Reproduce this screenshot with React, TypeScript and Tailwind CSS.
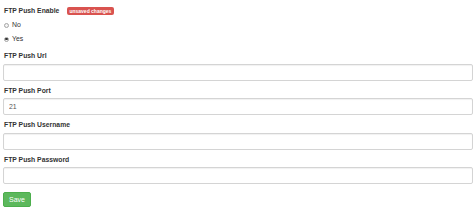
import { useState } from 'react';

const fields = [
  { label: 'FTP Push Url', value: '' },
  { label: 'FTP Push Port', value: '21' },
  { label: 'FTP Push Username', value: '' },
  { label: 'FTP Push Password', value: '' },
];

function Radio({ checked, label, onClick }: { checked: boolean; label: string; onClick: () => void }) {
  return (
    <label onClick={onClick} className="flex items-center h-[8px] cursor-pointer">
      <span className="ml-[1px] w-[5px] h-[5px] rounded-full border-[0.8px] border-[#a5a5a5] bg-[#f4f4f4] flex items-center justify-center">
        {checked && <span className="w-[2.4px] h-[2.4px] rounded-full bg-[#333]" />}
      </span>
      <span className="ml-[3px] text-[6.9px] leading-[8px] text-[#333]">{label}</span>
    </label>
  );
}

export default function App() {
  const [enabled, setEnabled] = useState(true);

  return (
    <div
      className="w-[474px] h-[210px] bg-white pl-[3px] pr-[1px] pt-[7px] flex flex-col"
      style={{ fontFamily: '"Liberation Sans", Arial, sans-serif' }}
    >
      <div className="flex items-center h-[8px] pl-[1px]">
        <span className="text-[6.8px] leading-[8px] font-bold text-[#333]">FTP Push Enable</span>
        <span className="ml-[7.5px] h-[8px] px-[2.5px] rounded-[2px] bg-[#d9534f] text-white text-[5px] font-bold leading-[8px]">
          unsaved changes
        </span>
      </div>

      <div className="mt-[6px] flex flex-col gap-[6px]">
        <Radio checked={!enabled} label="No" onClick={() => setEnabled(false)} />
        <Radio checked={enabled} label="Yes" onClick={() => setEnabled(true)} />
      </div>

      <div className="mt-[9px] flex flex-col gap-[6px]">
        {fields.map((f) => (
          <div key={f.label} className="flex flex-col">
            <span className="pl-[1px] h-[8px] text-[6.8px] leading-[8px] font-bold text-[#333]">{f.label}</span>
            <input
              defaultValue={f.value}
              type={f.label.includes('Password') ? 'password' : 'text'}
              className="mt-[3.5px] h-[17px] w-full rounded-[2px] border-[0.8px] border-[#d4d4d4] shadow-[inset_0_1px_1px_rgba(0,0,0,0.06)] px-[5px] text-[6.9px] text-[#555] outline-none"
            />
          </div>
        ))}
      </div>

      <button className="mt-[8px] w-[28px] h-[15px] rounded-[2px] bg-[#5cb85c] border-[0.8px] border-[#4cae4c] text-white text-[7px] leading-[13px]">
        Save
      </button>
    </div>
  );
}
